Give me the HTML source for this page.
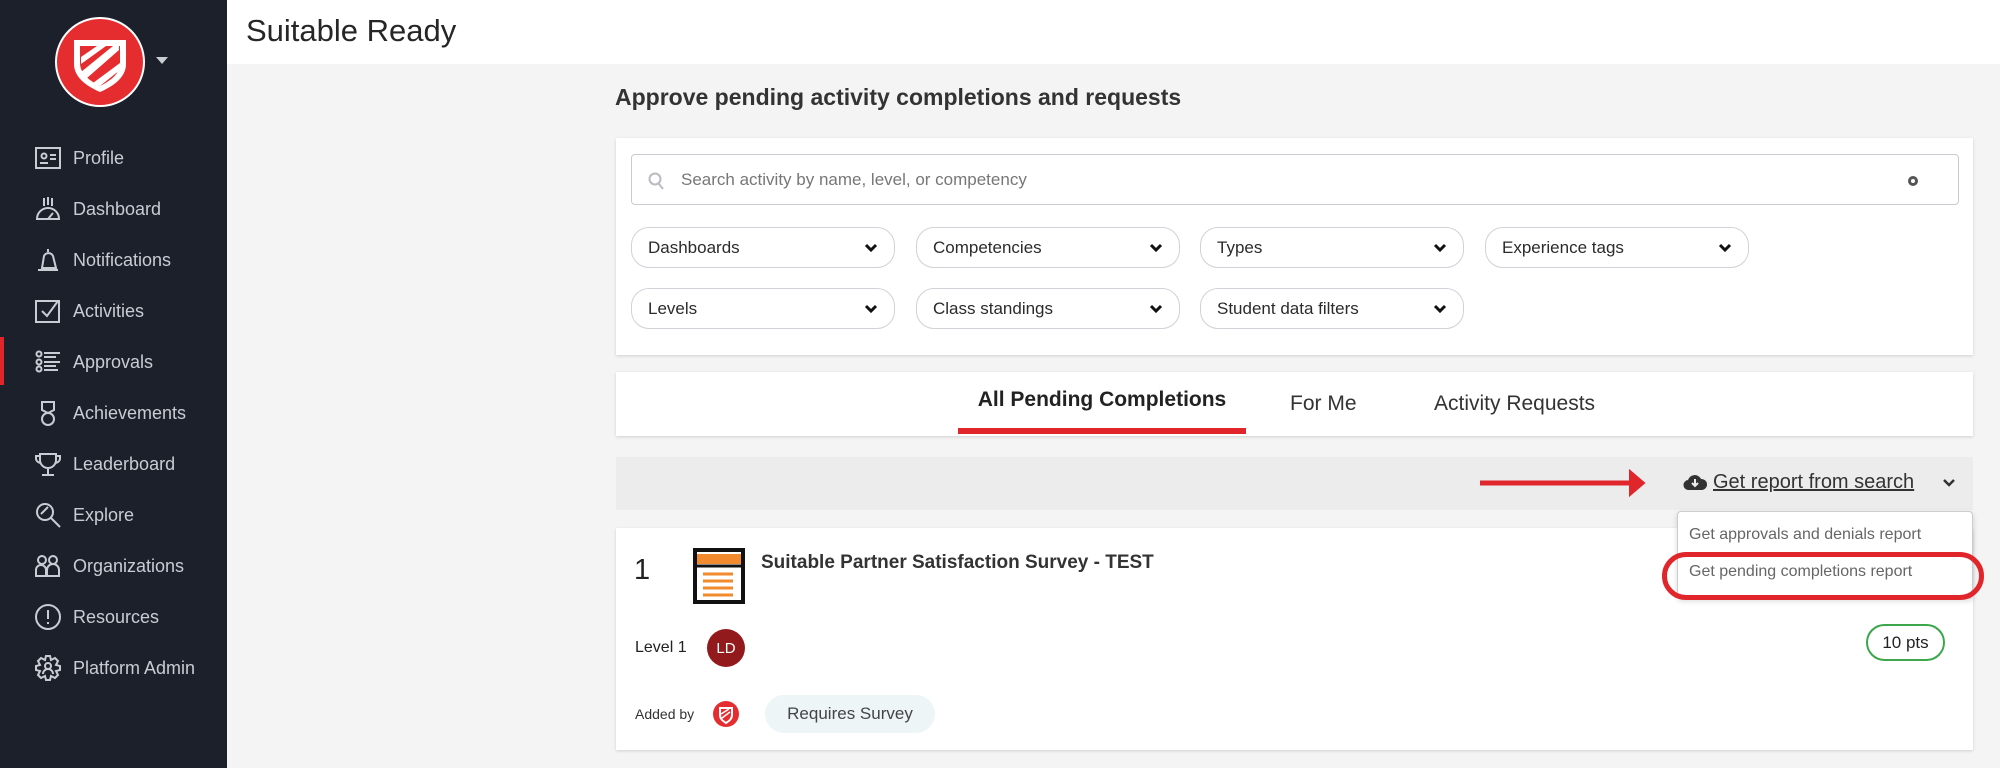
<!DOCTYPE html>
<html><head><meta charset="utf-8"><style>
*{box-sizing:border-box;margin:0;padding:0}
body{width:2000px;height:768px;position:relative;overflow:hidden;background:#f4f4f4;font-family:"Liberation Sans",sans-serif;color:#2b2b2b}
.a{position:absolute}
.side{left:0;top:0;width:227px;height:768px;background:#1b202b}
.nav{position:absolute;left:34px;height:30px;display:flex;align-items:center;color:#c9ccd2;font-size:18px}
.nav svg{width:28px;height:28px;margin-right:11px}
.card{background:#fff;box-shadow:0 1px 3px rgba(0,0,0,.15)}
.dd{position:absolute;height:41px;width:264px;border:1px solid #cfd2d6;border-radius:18px;background:#fff;font-size:17px;display:flex;align-items:center;padding:0 16px;justify-content:space-between}
.chev{width:14px;height:10px}
</style></head><body>
<div class="a side"></div>
<div class="a" style="left:0;top:337px;width:4px;height:48px;background:#e0262b"></div>
<svg class="a" style="left:54px;top:16px" width="92" height="92" viewBox="0 0 92 92"><circle cx="46" cy="46" r="44" fill="#e52d2f" stroke="#fff" stroke-width="2"/><path d="M20 24h52v24c0 13-12 22-26 28C32 70 20 61 20 48z" fill="#fff"/><path d="M26 30h40v17c0 10-8 17-20 23-12-6-20-13-20-23z" fill="#e52d2f"/><path d="M27 41l16-11h9L27 48zM27 56l32-26h6v4L33 62zM39 67l27-20v7L46 70z" fill="#fff"/></svg>
<svg class="a" style="left:156px;top:57px" width="12" height="7"><path d="M0 0h12L6 7z" fill="#c9ccd2"/></svg>

<div class="nav" style="top:143px"><svg viewBox="0 0 28 28" fill="none" stroke="#c9ccd2" stroke-width="2"><rect x="2" y="4" width="24" height="20"/><circle cx="10" cy="12" r="2.5"/><path d="M6 19h8M16 11h6M16 15h6"/></svg>Profile</div>
<div class="nav" style="top:194px"><svg viewBox="0 0 28 28" fill="none" stroke="#c9ccd2" stroke-width="2"><path d="M3 24a11 11 0 0 1 22 0zM10 3v8M14 2v8M18 3v8M14 24l5-6"/></svg>Dashboard</div>
<div class="nav" style="top:245px"><svg viewBox="0 0 28 28" fill="none" stroke="#c9ccd2" stroke-width="2"><path d="M8 22l2-12a5 5 0 0 1 9 0l3 12zM4 24h20M14 3v3"/></svg>Notifications</div>
<div class="nav" style="top:296px"><svg viewBox="0 0 28 28" fill="none" stroke="#c9ccd2" stroke-width="2"><rect x="2" y="4" width="23" height="21"/><path d="M8 14l5 5 11-15"/></svg>Activities</div>
<div class="nav" style="top:347px"><svg viewBox="0 0 28 28" fill="none" stroke="#c9ccd2" stroke-width="2"><circle cx="5" cy="6" r="2.5"/><circle cx="5" cy="14" r="2.5"/><circle cx="5" cy="21" r="2.5"/><path d="M10 5h16M10 9h12M10 14h16M10 18h12M10 22h14"/></svg>Approvals</div>
<div class="nav" style="top:398px"><svg viewBox="0 0 28 28" fill="none" stroke="#c9ccd2" stroke-width="2"><path d="M8 3h12v8l-6 3-6-3z"/><circle cx="14" cy="20" r="6"/></svg>Achievements</div>
<div class="nav" style="top:449px"><svg viewBox="0 0 28 28" fill="none" stroke="#c9ccd2" stroke-width="2"><path d="M6 4h16v6a8 8 0 0 1-16 0zM6 6H2v3a5 5 0 0 0 5 4M22 6h4v3a5 5 0 0 1-5 4M14 18v6M8 25h12"/></svg>Leaderboard</div>
<div class="nav" style="top:500px"><svg viewBox="0 0 28 28" fill="none" stroke="#c9ccd2" stroke-width="2"><circle cx="11" cy="11" r="8"/><path d="M17 17l9 9M7 13l7-7"/></svg>Explore</div>
<div class="nav" style="top:551px"><svg viewBox="0 0 28 28" fill="none" stroke="#c9ccd2" stroke-width="2"><circle cx="8" cy="8" r="4"/><circle cx="19" cy="8" r="4"/><path d="M2 24v-6a5 5 0 0 1 10 0v6zM13 24v-6a5 5 0 0 1 12 0v6z"/></svg>Organizations</div>
<div class="nav" style="top:602px"><svg viewBox="0 0 28 28" fill="none" stroke="#c9ccd2" stroke-width="2"><circle cx="14" cy="14" r="12"/><path d="M14 7v9M14 19v2"/></svg>Resources</div>
<div class="nav" style="top:653px"><svg viewBox="0 0 28 28" fill="none" stroke="#c9ccd2" stroke-width="2"><path d="M12 2h4l1 4 4-2 3 3-2 4 4 1v4l-4 1 2 4-3 3-4-2-1 4h-4l-1-4-4 2-3-3 2-4-4-1v-4l4-1-2-4 3-3 4 2z"/><circle cx="14" cy="12" r="3"/><path d="M9 20a5 5 0 0 1 10 0"/></svg>Platform Admin</div>

<div class="a" style="left:227px;top:0;width:1773px;height:64px;background:#fff"></div>
<div class="a" style="left:246px;top:13px;font-size:31px;color:#262626">Suitable Ready</div>

<div class="a" style="left:615px;top:84px;font-size:23px;font-weight:bold;color:#333">Approve pending activity completions and requests</div>

<div class="a card" style="left:616px;top:138px;width:1357px;height:217px"></div>
<div class="a" style="left:631px;top:154px;width:1328px;height:51px;border:1px solid #c8cbcf;border-radius:4px;background:#fff"></div>
<svg class="a" style="left:648px;top:172px" width="16" height="18" fill="none" stroke="#b8bcc2" stroke-width="2"><circle cx="7" cy="7" r="5.5"/><path d="M11 12l4 5"/></svg>
<div class="a" style="left:681px;top:170px;font-size:17px;color:#777">Search activity by name, level, or competency</div>
<svg class="a" style="left:1907px;top:175px" width="12" height="12"><circle cx="6" cy="6" r="5" fill="#555"/><circle cx="6" cy="6" r="2" fill="#fff"/></svg>

<div class="dd" style="left:631px;top:227px">Dashboards<svg class="chev" viewBox="0 0 14 10"><path d="M2 2l5 5 5-5" stroke="#111" stroke-width="3" fill="none"/></svg></div>
<div class="dd" style="left:916px;top:227px">Competencies<svg class="chev" viewBox="0 0 14 10"><path d="M2 2l5 5 5-5" stroke="#111" stroke-width="3" fill="none"/></svg></div>
<div class="dd" style="left:1200px;top:227px">Types<svg class="chev" viewBox="0 0 14 10"><path d="M2 2l5 5 5-5" stroke="#111" stroke-width="3" fill="none"/></svg></div>
<div class="dd" style="left:1485px;top:227px">Experience tags<svg class="chev" viewBox="0 0 14 10"><path d="M2 2l5 5 5-5" stroke="#111" stroke-width="3" fill="none"/></svg></div>
<div class="dd" style="left:631px;top:288px">Levels<svg class="chev" viewBox="0 0 14 10"><path d="M2 2l5 5 5-5" stroke="#111" stroke-width="3" fill="none"/></svg></div>
<div class="dd" style="left:916px;top:288px">Class standings<svg class="chev" viewBox="0 0 14 10"><path d="M2 2l5 5 5-5" stroke="#111" stroke-width="3" fill="none"/></svg></div>
<div class="dd" style="left:1200px;top:288px">Student data filters<svg class="chev" viewBox="0 0 14 10"><path d="M2 2l5 5 5-5" stroke="#111" stroke-width="3" fill="none"/></svg></div>

<div class="a card" style="left:616px;top:372px;width:1357px;height:64px"></div>
<div class="a" style="left:958px;top:388px;width:288px;text-align:center;font-size:21px;font-weight:bold;color:#222">All Pending Completions</div>
<div class="a" style="left:958px;top:428px;width:288px;height:6px;background:#e0262b"></div>
<div class="a" style="left:1290px;top:392px;font-size:21px;color:#333">For Me</div>
<div class="a" style="left:1434px;top:392px;font-size:21px;color:#333">Activity Requests</div>

<div class="a" style="left:616px;top:457px;width:1357px;height:53px;background:#ececec"></div>
<svg class="a" style="left:1478px;top:468px" width="180" height="30"><path d="M2 15h160" stroke="#e0262b" stroke-width="5"/><path d="M152 3l14 12-14 12z" fill="#e0262b" stroke="#e0262b" stroke-width="2"/></svg>
<svg class="a" style="left:1683px;top:473px" width="24" height="18" viewBox="0 0 24 18"><path d="M6 17a5 5 0 0 1-1-10 7 7 0 0 1 13-1 5 5 0 0 1 1 11z" fill="#333"/><path d="M12 6v7M9 10l3 3 3-3" stroke="#ececec" stroke-width="2" fill="none"/></svg>
<div class="a" style="left:1713px;top:471px;font-size:20px;color:#333;text-decoration:underline">Get report from search</div>
<svg class="a" style="left:1942px;top:478px" width="14" height="10"><path d="M2 2l5 5 5-5" stroke="#333" stroke-width="2.5" fill="none"/></svg>

<div class="a card" style="left:616px;top:528px;width:1357px;height:222px"></div>
<div class="a" style="left:634px;top:554px;font-size:29px;color:#222">1</div>
<svg class="a" style="left:693px;top:548px" width="52" height="56" viewBox="0 0 52 56"><rect x="2" y="2" width="48" height="52" fill="#fff" stroke="#111" stroke-width="4"/><rect x="4" y="6" width="44" height="10" fill="#f28a2e"/><path d="M4 18h44" stroke="#111" stroke-width="3"/><path d="M10 26h30M10 33h30M10 40h30M10 47h30" stroke="#f28a2e" stroke-width="3"/></svg>
<div class="a" style="left:761px;top:552px;font-size:19px;font-weight:bold;color:#333">Suitable Partner Satisfaction Survey - TEST</div>
<div class="a" style="left:635px;top:639px;font-size:16px;color:#222">Level 1</div>
<div class="a" style="left:707px;top:629px;width:38px;height:38px;border-radius:50%;background:#921a1c;color:#fff;font-size:15px;display:flex;align-items:center;justify-content:center">LD</div>
<div class="a" style="left:1866px;top:624px;width:79px;height:37px;border:2px solid #3ba64a;border-radius:19px;font-size:17px;display:flex;align-items:center;justify-content:center;color:#222">10 pts</div>
<div class="a" style="left:635px;top:706px;font-size:14px;color:#333">Added by</div>
<svg class="a" style="left:712px;top:700px" width="28" height="28" viewBox="0 0 28 28"><circle cx="14" cy="14" r="13" fill="#e52d2f"/><path d="M8 8h12v7c0 4-3 6-6 8-3-2-6-4-6-8z" fill="none" stroke="#fff" stroke-width="2"/><path d="M9 14l8-5M10 18l8-6" stroke="#fff" stroke-width="1.5"/></svg>
<div class="a" style="left:765px;top:695px;width:170px;height:38px;border-radius:19px;background:#edf5f6;font-size:17px;display:flex;align-items:center;justify-content:center;color:#444">Requires Survey</div>

<div class="a" style="left:1677px;top:511px;width:296px;height:88px;background:#fff;border:1px solid #ccc;border-radius:4px;box-shadow:0 2px 6px rgba(0,0,0,.15)"></div>
<div class="a" style="left:1689px;top:526px;font-size:16px;color:#666">Get approvals and denials report</div>
<div class="a" style="left:1689px;top:563px;font-size:16px;color:#666">Get pending completions report</div>
<div class="a" style="left:1662px;top:552px;width:322px;height:48px;border:5px solid #e0262b;border-radius:24px"></div>
</body></html>
